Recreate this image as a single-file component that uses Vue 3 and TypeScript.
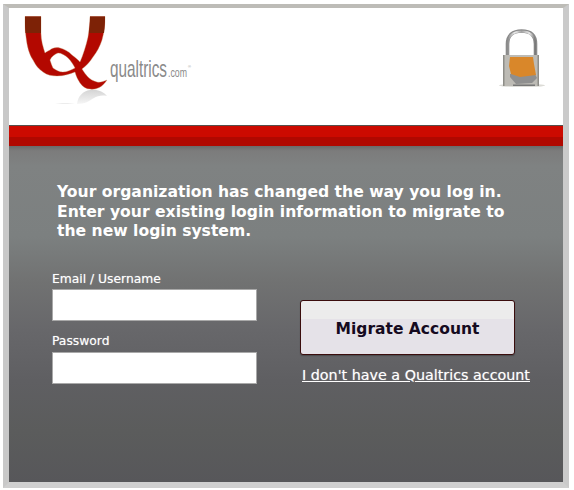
<script setup lang="ts">
const intro: string[] = [
  'Your organization has changed the way you log in.',
  'Enter your existing login information to migrate to',
  'the new login system.',
]
</script>

<template>
  <div class="page">
    <div class="frame">
      <header class="top">
        <svg class="logo" width="190" height="106" viewBox="0 0 190 106">
          <defs>
            <linearGradient id="refl" x1="0" x2="0" y1="0" y2="1">
              <stop offset="0" stop-color="#d4d4d4" />
              <stop offset="1" stop-color="#f6f6f6" />
            </linearGradient>
          </defs>
          <path fill="url(#refl)" d="M68 96 C69 88 74 83 81 82 C88 81 95 84 98 88 C93 87 88 88 85 90 C80 93 76 96 68 96 Z" />
          <path class="reflect-line" d="M46 96 C52 95 60 95 66 96 Z" />
          <path class="q" fill-rule="evenodd" d="M16 8.5 C16 16 16 23 17 29 C18 38 20 46 24 52 C27 58 30 61 34 64 C38 67 43 68 48 68 C55 68 61 66 66 64 C67 68 69 72 71 75 C74 79 77 81 81 81 C86 82 93 80 98 72 C95 73 91 75 88 74 C84 73 81 71 79 69 C77 67 75 64 73 61 C77 58 81 54 84 49 C88 44 91 38 93 32 C95 25 96 17 96 8.5 L81 8.5 C81 15 80 22 79 29 C77 38 74 47 71 54 C69 52 66 49 63 47 C59 43 55 41 51 40 C47 39 43 40 41 42 C39 43 37 44 36 45 C34 39 32 32 32 25 L32 8.5 Z M41 52 C43 48 46 46 49 45 C52 45 56 47 59 50 C62 53 64 56 66 60 C62 62 58 64 54 64 C50 64 47 62 44 60 C43 58 42 55 41 52 Z" />
          <path class="q-dark" d="M16 8.5 L32 8.5 L32 25 L16.5 25 C16 20 16 14 16 8.5 Z M81 8.5 L96 8.5 C96 14 95.7 20 95 25 L80 25 C80.6 20 81 14 81 8.5 Z" />
          <text class="word" transform="translate(101 69) scale(0.666 1)">qualtrics</text>
          <text class="dom" transform="translate(159 69) scale(0.73 1)">.com</text>
          <text class="tm" x="179" y="60">®</text>
        </svg>
        <svg class="lock" width="50" height="60" viewBox="0 0 50 60">
          <defs>
            <linearGradient id="shackle" x1="0" x2="1" y1="0" y2="0">
              <stop offset="0" stop-color="#8d8d8d" />
              <stop offset="0.25" stop-color="#ececec" />
              <stop offset="0.5" stop-color="#a5a5a5" />
              <stop offset="0.8" stop-color="#e8e8e8" />
              <stop offset="1" stop-color="#777" />
            </linearGradient>
          </defs>
          <ellipse cx="24" cy="57.5" rx="23" ry="1.6" fill="#dcdbd6" />
          <path d="M9.5 29 L9.5 16 C9.5 7 15 3 23.5 3 C32 3 37.5 7 37.5 16 L37.5 29" fill="none" stroke="#8a8a8a" stroke-width="3.6" />
          <path d="M10 29 L10 16 C10 7.5 15 3.5 23.5 3.5 C32 3.5 37 7.5 37 16 L37 29" fill="none" stroke="url(#shackle)" stroke-width="1.8" />
          <rect x="5" y="27" width="36" height="31" fill="#bdbbb5" />
          <rect x="5" y="27" width="1.5" height="31" fill="#8e8d88" />
          <rect x="39.5" y="27" width="1.5" height="31" fill="#8e8d88" />
          <path d="M12 35 L12 49 L18 56 L34 55 L39 50 L37 46 L12 46 Z" fill="#8f8f8f" />
          <path d="M12 29 L35 29 L36 36 L38 47 L22 49 L13 46 L11 38 Z" fill="#d9872a" />
          <rect x="15" y="56.5" width="22" height="1.5" fill="#777" />
        </svg>
      </header>
      <div class="redbar"></div>
      <main class="body">
        <p class="intro">
          <span v-for="line in intro" :key="line" class="intro-line">{{ line }}</span>
        </p>
        <div class="columns">
          <form class="fields">
            <label class="label" for="user">Email / Username</label>
            <input id="user" class="input" type="text" />
            <label class="label pw" for="pass">Password</label>
            <input id="pass" class="input" type="password" />
          </form>
          <div class="actions">
            <button class="migrate" type="button">Migrate Account</button>
            <a class="noacct" href="#">I don't have a Qualtrics account</a>
          </div>
        </div>
      </main>
    </div>
  </div>
</template>

<style>
html, body { margin: 0; background: #fff; }
</style>

<style scoped>
.page {
  width: 574px;
  height: 490px;
  box-sizing: border-box;
  padding: 4px 5px 2px 3px;
  background: #fff;
  overflow: hidden;
}
.frame {
  height: 484px;
  box-sizing: border-box;
  display: flex;
  flex-direction: column;
  border-style: solid;
  border-width: 4px 6px 6px 6px;
  border-color: #bdbcb7 #cacaca #cfcfcf #c8c8c8;
  font-family: "DejaVu Sans", sans-serif;
}
.top {
  height: 117px;
  flex: none;
  background: #fff;
  display: flex;
  justify-content: space-between;
  align-items: flex-start;
  padding-right: 15px;
}
.logo { display: block; }
.q { fill: #b30800; stroke: #c9a070; stroke-width: 0.35; }
.q-dark { fill: #7d2206; }
.reflect-line { fill: #e6e6e6; }
.word { font-family: "Liberation Sans", sans-serif; font-size: 23px; fill: #8a8a8a; }
.dom { font-family: "Liberation Sans", sans-serif; font-size: 12px; fill: #8a8a8a; }
.tm { font-family: "Liberation Sans", sans-serif; font-size: 4px; fill: #999; }
.lock { display: block; margin-top: 20px; }
.redbar {
  height: 20px;
  flex: none;
  border-top: 1px solid #55504c;
  background: linear-gradient(#cc0a00 0, #cc0a00 11px, #b00800 11px, #b00800 100%);
}
.body {
  flex: 1;
  min-height: 0;
  background: linear-gradient(#6a6a6a 0, #7c7c7c 5px, #7f8282 20px, #7c8080 90px, #717272 135px, #67676a 185px, #5f5f62 235px, #5b5c5c 285px, #57575a 100%);
  color: #fff;
  padding: 37px 0 0 48px;
}
.intro {
  margin: 0;
  font-size: 15.6px;
  font-weight: 700;
  line-height: 19.5px;
}
.intro-line { display: block; white-space: nowrap; }
.columns {
  display: flex;
  margin-top: 30px;
}
.fields {
  display: flex;
  flex-direction: column;
  width: 205px;
  margin-left: -5px;
}
.label {
  font-size: 12.3px;
  line-height: 14px;
  margin-bottom: 3px;
  text-shadow: 0 0 1px rgba(255, 255, 255, 0.5);
}
.label.pw { margin-top: 13px; margin-bottom: 4px; }
.input {
  box-sizing: border-box;
  width: 205px;
  height: 32px;
  margin: 0;
  background: #fff;
  border: 1px solid #a9a9a9;
  border-radius: 0;
  padding: 0;
}
.actions {
  margin-left: 43px;
  margin-top: 28px;
  display: flex;
  flex-direction: column;
  align-items: flex-start;
}
.migrate {
  width: 215px;
  height: 55px;
  box-sizing: border-box;
  margin: 0;
  padding: 3px 0 0;
  border: 1px solid #3a0d0d;
  border-radius: 3px;
  background: linear-gradient(#ececec 0, #ececec 18px, #e5e2e8 18px, #e5e2e8 100%);
  color: #150a20;
  font-family: "DejaVu Sans", sans-serif;
  font-size: 15.5px;
  font-weight: 700;
  box-shadow: 0 1px 1px rgba(50, 50, 50, 0.5);
}
.noacct {
  margin: 11px 0 0 2px;
  color: #fff;
  font-size: 14.3px;
  line-height: 18px;
  white-space: nowrap;
  text-decoration: underline;
  text-shadow: 0 0 1px rgba(255, 255, 255, 0.5);
}
</style>
